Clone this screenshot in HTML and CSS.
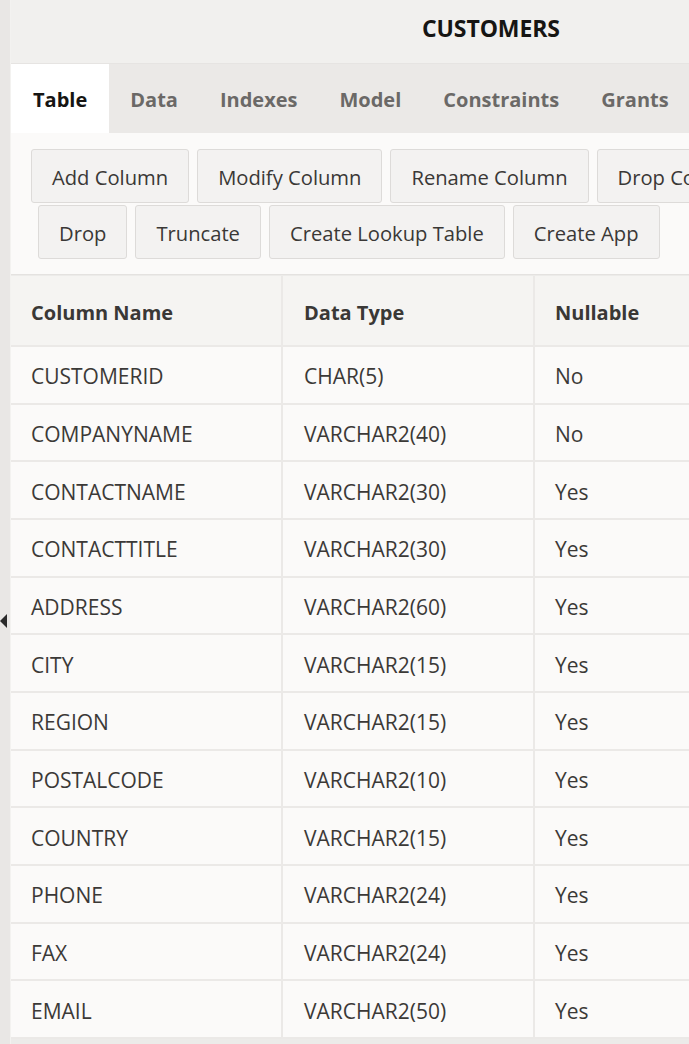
FILE: index.html
```html
<!DOCTYPE html>
<html lang="en">
<head>
<meta charset="utf-8">
<title>CUSTOMERS</title>
<link rel="stylesheet" href="styles.css">
</head>
<body>
<div class="app">
  <div class="strip"><span class="handle"></span></div>
  <div class="main">
    <div class="titlebar"><h1 class="title">CUSTOMERS</h1></div>
    <div class="tabs">
      <div class="tab active">Table</div>
      <div class="tab">Data</div>
      <div class="tab">Indexes</div>
      <div class="tab">Model</div>
      <div class="tab">Constraints</div>
      <div class="tab">Grants</div>
    </div>
    <div class="toolbar">
      <div class="btnrow">
        <button class="btn">Add Column</button>
        <button class="btn">Modify Column</button>
        <button class="btn">Rename Column</button>
        <button class="btn">Drop Column</button>
      </div>
      <div class="btnrow second">
        <button class="btn">Drop</button>
        <button class="btn">Truncate</button>
        <button class="btn">Create Lookup Table</button>
        <button class="btn">Create App</button>
      </div>
    </div>
    <div class="grid">
      <div class="row head">
        <div class="cell">Column Name</div>
        <div class="cell">Data Type</div>
        <div class="cell last">Nullable</div>
      </div>
      <div class="row"><div class="cell">CUSTOMERID</div><div class="cell">CHAR(5)</div><div class="cell last">No</div></div>
      <div class="row"><div class="cell">COMPANYNAME</div><div class="cell">VARCHAR2(40)</div><div class="cell last">No</div></div>
      <div class="row"><div class="cell">CONTACTNAME</div><div class="cell">VARCHAR2(30)</div><div class="cell last">Yes</div></div>
      <div class="row"><div class="cell">CONTACTTITLE</div><div class="cell">VARCHAR2(30)</div><div class="cell last">Yes</div></div>
      <div class="row"><div class="cell">ADDRESS</div><div class="cell">VARCHAR2(60)</div><div class="cell last">Yes</div></div>
      <div class="row"><div class="cell">CITY</div><div class="cell">VARCHAR2(15)</div><div class="cell last">Yes</div></div>
      <div class="row"><div class="cell">REGION</div><div class="cell">VARCHAR2(15)</div><div class="cell last">Yes</div></div>
      <div class="row"><div class="cell">POSTALCODE</div><div class="cell">VARCHAR2(10)</div><div class="cell last">Yes</div></div>
      <div class="row"><div class="cell">COUNTRY</div><div class="cell">VARCHAR2(15)</div><div class="cell last">Yes</div></div>
      <div class="row"><div class="cell">PHONE</div><div class="cell">VARCHAR2(24)</div><div class="cell last">Yes</div></div>
      <div class="row"><div class="cell">FAX</div><div class="cell">VARCHAR2(24)</div><div class="cell last">Yes</div></div>
      <div class="row"><div class="cell">EMAIL</div><div class="cell">VARCHAR2(50)</div><div class="cell last">Yes</div></div>
    </div>
  </div>
</div>
</body>
</html>
```

FILE: styles.css
```css
html, body {
  margin: 0;
  padding: 0;
  overflow: hidden;
  background: #ecebe9;
  font-family: "Open Sans", "Noto Sans", sans-serif;
}

.app {
  display: flex;
  width: 689px;
  height: 1044px;
  position: relative;
}

.strip {
  width: 10px;
  flex: 0 0 10px;
  background: #e9e7e5;
  border-right: 1px solid #f3f2f0;
}

.handle {
  position: absolute;
  left: 0;
  top: 614px;
  width: 0;
  height: 0;
  border-top: 7px solid transparent;
  border-bottom: 7px solid transparent;
  border-right: 7px solid #2a2a2a;
}

.main {
  flex: 1 1 auto;
  min-width: 0;
  overflow: hidden;
  display: flex;
  flex-direction: column;
}

.titlebar {
  background: #f1f0ee;
  border-bottom: 1px solid #e6e4e2;
  display: flex;
  align-items: center;
  padding-left: 411px;
  padding-bottom: 7px;
  box-sizing: border-box;
  flex: 0 0 64px;
}

.title {
  margin: 0;
  font-size: 23px;
  font-weight: 700;
  color: #161513;
  letter-spacing: -0.1px;
}

.tabs {
  display: flex;
  flex: 0 0 69px;
  background: #ebe9e7;
  white-space: nowrap;
}

.tab {
  display: flex;
  align-items: center;
  padding: 1px 21px 0;
  font-size: 20px;
  font-weight: 700;
  color: #6b6967;
}

.tab.active {
  background: #ffffff;
  color: #161513;
  padding-left: 22px;
  padding-right: 22px;
}

.toolbar {
  background: #fbfaf9;
  padding: 16px 0 15px 20px;
  border-bottom: 1px solid #e4e2e0;
  display: flex;
  flex-direction: column;
  gap: 2px;
  flex: 0 0 auto;
}

.btnrow {
  display: flex;
  gap: 8px;
  white-space: nowrap;
}

.btnrow.second {
  padding-left: 7px;
}

.btn {
  height: 54px;
  padding: 2px 20px 0;
  background: #f3f2f1;
  border: 1px solid #dddbd9;
  border-radius: 3px;
  font-family: "Open Sans", "Noto Sans", sans-serif;
  font-size: 20.2px;
  color: #3a3836;
  flex: 0 0 auto;
}

.grid {
  margin-top: 1px;
  display: flex;
  flex-direction: column;
}

.row {
  display: grid;
  grid-template-columns: 272px 252px 1fr;
  height: 57.67px;
  box-sizing: border-box;
  background: #fbfaf9;
  border-bottom: 2px solid #ebe9e7;
}

.row.head {
  height: 71px;
  background: #f5f4f2;
  font-weight: 700;
}

.cell {
  display: flex;
  align-items: center;
  padding-left: 21px;
  padding-top: 3px;
  font-size: 21px;
  color: #3b3937;
  border-right: 2px solid #ebe9e7;
  white-space: nowrap;
  overflow: hidden;
}

.row .cell:first-child {
  padding-left: 20px;
}

.row.head .cell {
  font-size: 20px;
  color: #3a3836;
}

.cell.last {
  border-right: none;
  padding-left: 20px;
}
```
